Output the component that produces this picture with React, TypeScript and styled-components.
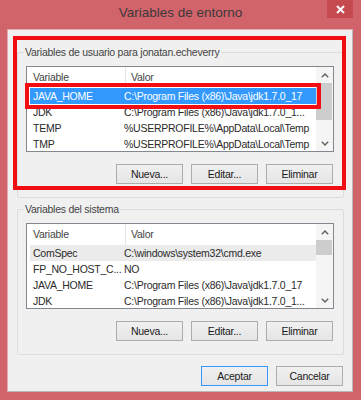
import React from "react";
import styled, { createGlobalStyle } from "styled-components";

type EnvVar = {
  name: string;
  value: string;
  selected?: boolean;
  muted?: boolean;
};

const userVars: EnvVar[] = [
  { name: "JAVA_HOME", value: "C:\\Program Files (x86)\\Java\\jdk1.7.0_17", selected: true },
  { name: "JDK", value: "C:\\Program Files (x86)\\Java\\jdk1.7.0_1..." },
  { name: "TEMP", value: "%USERPROFILE%\\AppData\\Local\\Temp" },
  { name: "TMP", value: "%USERPROFILE%\\AppData\\Local\\Temp" }
];

const systemVars: EnvVar[] = [
  { name: "ComSpec", value: "C:\\windows\\system32\\cmd.exe", muted: true },
  { name: "FP_NO_HOST_C...", value: "NO" },
  { name: "JAVA_HOME", value: "C:\\Program Files (x86)\\Java\\jdk1.7.0_17" },
  { name: "JDK", value: "C:\\Program Files (x86)\\Java\\jdk1.7.0_1..." }
];

const GlobalStyle = createGlobalStyle`
  html, body {
    margin: 0;
    padding: 0;
  }
  body {
    width: 361px;
    height: 400px;
    overflow: hidden;
    background: #d1636a;
    font-family: "Liberation Sans", Arial, sans-serif;
  }
`;

const Window = styled.div`
  width: 361px;
  height: 400px;
  display: flex;
  flex-direction: column;
  background: #d1636a;
`;

const TitleBar = styled.div`
  height: 29px;
  flex-shrink: 0;
  display: grid;
  grid-template-columns: 1fr auto 1fr;
  align-items: start;
`;

const Title = styled.div`
  grid-column: 2;
  font-size: 13.5px;
  line-height: 26px;
  color: #3a3a3a;
`;

const CloseButton = styled.div`
  grid-column: 3;
  justify-self: end;
  margin-right: 8px;
  width: 26px;
  height: 18px;
  background: #c44a50;
  display: flex;
  align-items: center;
  justify-content: center;
`;

const Client = styled.div`
  flex: 1;
  margin: 0 8px 8px 7px;
  padding: 15px 8px 0 9px;
  background: #f0f0f0;
  border: 1px solid #b9b9b9;
  border-top-color: #e3a9ac;
  border-left-color: #e3a9ac;
  display: flex;
  flex-direction: column;
`;

const Marked = styled.div`
  position: relative;

  &::after {
    content: "";
    position: absolute;
    top: -9px;
    left: -4px;
    right: -2px;
    bottom: 8px;
    border: 4px solid #f20d12;
    pointer-events: none;
  }
`;

const GroupBox = styled.fieldset<{ $gap?: number }>`
  margin: 0;
  min-width: 0;
  margin-top: ${(p) => p.$gap || 0}px;
  border: 1px solid #dcdcdc;
  border-radius: 2px;
  padding: 7px 9px 13px 8px;
  display: flex;
  flex-direction: column;
  gap: 12px;
`;

const Legend = styled.legend`
  padding: 0 1px;
  margin-left: -2px;
  font-size: 10.5px;
  line-height: 14px;
  letter-spacing: -0.25px;
  color: #444;
`;

const ListView = styled.div`
  height: 84px;
  border: 1px solid #828790;
  background: #fff;
  display: flex;
  overflow-x: visible;
  overflow-y: clip;
`;

const TableArea = styled.div`
  flex: 1;
  display: flex;
  flex-direction: column;
`;

const Header = styled.div`
  height: 21px;
  flex-shrink: 0;
  display: flex;
`;

const HeaderCell = styled.div<{ $width?: number }>`
  ${(p) => (p.$width ? `width: ${p.$width}px; border-right: 1px solid #e5e5e5;` : "flex: 1;")}
  padding-left: ${(p) => (p.$width ? 6 : 5)}px;
  font-size: 10.5px;
  line-height: 21px;
  letter-spacing: -0.25px;
  color: #444;
`;

const Row = styled.div<{ $selected?: boolean; $muted?: boolean }>`
  margin-left: 3px;
  height: 16px;
  flex-shrink: 0;
  display: flex;
  font-size: 10.5px;
  line-height: 16px;
  letter-spacing: -0.25px;
  white-space: nowrap;
  color: ${(p) => (p.$selected ? "#fff" : "#2a2a2a")};
  background: ${(p) => (p.$selected ? "#3399ff" : p.$muted ? "#ebebeb" : "transparent")};
  ${(p) =>
    p.$selected &&
    `
    position: relative;
    z-index: 2;
    outline: 4px solid #f20d12;
    outline-offset: 1px;
  `}
`;

const NameCell = styled.div`
  width: 88px;
  flex-shrink: 0;
  padding-left: 3px;
  box-sizing: border-box;
  overflow: visible;
`;

const ValueCell = styled.div`
  flex: 1;
  padding-left: 6px;
  overflow: hidden;
`;

const ScrollBar = styled.div`
  width: 17px;
  flex-shrink: 0;
  background: #f5f5f5;
  display: flex;
  flex-direction: column;
`;

const ScrollArrow = styled.div`
  height: 16px;
  flex-shrink: 0;
  display: flex;
  align-items: center;
  justify-content: center;
`;

const ScrollThumb = styled.div<{ $height: number }>`
  height: ${(p) => p.$height}px;
  flex-shrink: 0;
  margin-right: 1px;
  background: #cdcdcd;
`;

const ScrollTrack = styled.div`
  flex: 1;
`;

const ButtonRow = styled.div<{ $top?: number }>`
  display: flex;
  justify-content: flex-end;
  gap: 8px;
  padding-right: 1px;
  margin-top: ${(p) => p.$top || 0}px;
`;

const Button = styled.button<{ $default?: boolean }>`
  width: 67px;
  height: 20px;
  padding: 0;
  box-sizing: border-box;
  border: 1px solid ${(p) => (p.$default ? "#3399ff" : "#acacac")};
  border-radius: 0;
  background: linear-gradient(#f0f0f0, #e5e5e5);
  font-family: "Liberation Sans", Arial, sans-serif;
  font-size: 10.5px;
  letter-spacing: -0.25px;
  color: #1a1a1a;
`;

const Chevron: React.FC<{ down?: boolean }> = ({ down }) => (
  <svg width="8" height="5" viewBox="0 0 8 5">
    <polyline
      points={down ? "0.8,0.8 4,4 7.2,0.8" : "0.8,4.2 4,1 7.2,4.2"}
      fill="none"
      stroke="#606060"
      strokeWidth="1.4"
    />
  </svg>
);

const VariableList: React.FC<{ rows: EnvVar[]; thumb: number }> = ({ rows, thumb }) => (
  <ListView>
    <TableArea>
      <Header>
        <HeaderCell $width={92}>Variable</HeaderCell>
        <HeaderCell>Valor</HeaderCell>
      </Header>
      {rows.map((row, i) => (
        <Row key={i} $selected={row.selected} $muted={row.muted}>
          <NameCell>{row.name}</NameCell>
          <ValueCell>{row.value}</ValueCell>
        </Row>
      ))}
    </TableArea>
    <ScrollBar>
      <ScrollArrow>
        <Chevron />
      </ScrollArrow>
      <ScrollThumb $height={thumb} />
      <ScrollTrack />
      <ScrollArrow>
        <Chevron down />
      </ScrollArrow>
    </ScrollBar>
  </ListView>
);

const Actions: React.FC = () => (
  <ButtonRow>
    <Button>Nueva...</Button>
    <Button>Editar...</Button>
    <Button>Eliminar</Button>
  </ButtonRow>
);

const App: React.FC = () => (
  <>
    <GlobalStyle />
    <Window>
      <TitleBar>
        <Title>Variables de entorno</Title>
        <CloseButton>
          <svg width="9" height="9" viewBox="0 0 9 9">
            <path d="M1 1 L8 8 M8 1 L1 8" stroke="#fff" strokeWidth="2" />
          </svg>
        </CloseButton>
      </TitleBar>
      <Client>
        <Marked>
          <GroupBox>
            <Legend>Variables de usuario para jonatan.echeverry</Legend>
            <VariableList rows={userVars} thumb={37} />
            <Actions />
          </GroupBox>
        </Marked>
        <GroupBox $gap={4}>
          <Legend>Variables del sistema</Legend>
          <VariableList rows={systemVars} thumb={15} />
          <Actions />
        </GroupBox>
        <ButtonRow $top={11}>
          <Button $default>Aceptar</Button>
          <Button>Cancelar</Button>
        </ButtonRow>
      </Client>
    </Window>
  </>
);

export default App;
